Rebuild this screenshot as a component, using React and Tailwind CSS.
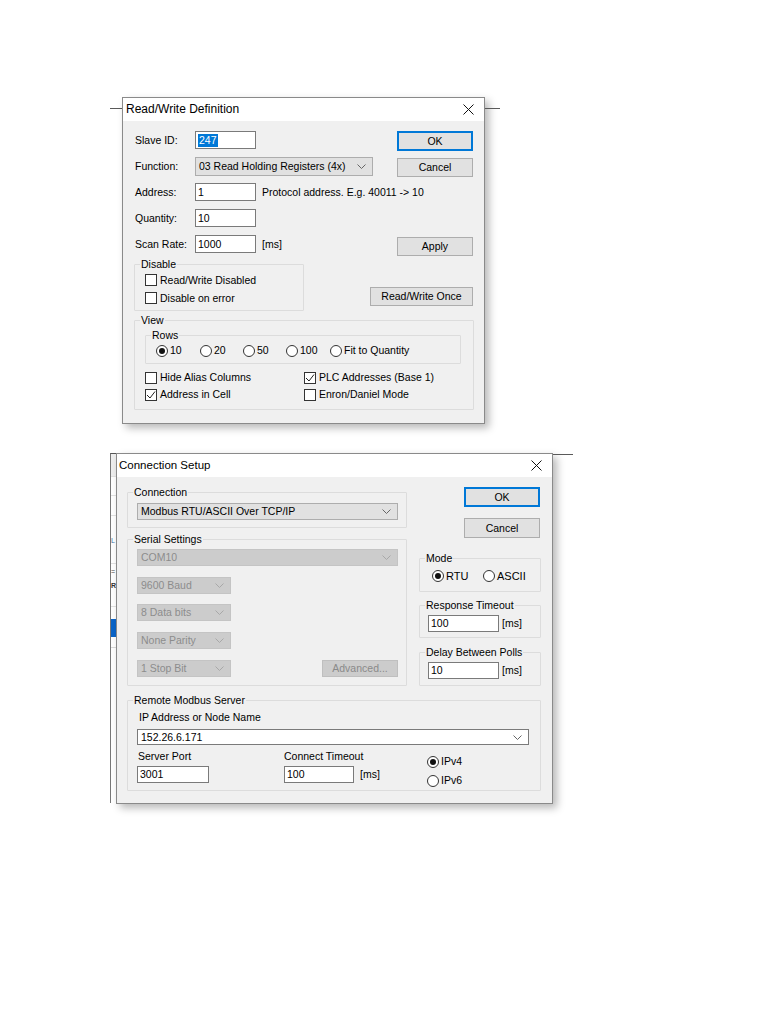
import React from 'react';

const FONT = "font-['Liberation_Sans',Arial,sans-serif]";

const Close = () => (
  <svg width="11" height="11" viewBox="0 0 11 11" className="shrink-0">
    <path d="M0.5 0.5 L10.5 10.5 M10.5 0.5 L0.5 10.5" stroke="#111" strokeWidth="1" />
  </svg>
);

const Chevron = ({ color = '#555' }) => (
  <svg width="9" height="5" viewBox="0 0 9 5" className="shrink-0">
    <path d="M0.5 0.5 L4.5 4.5 L8.5 0.5" stroke={color} strokeWidth="1" fill="none" />
  </svg>
);

const Btn = ({ children, def, disabled, className = '' }) => (
  <div
    className={`flex items-center justify-center border ${
      def ? 'border-[#0078d7] bg-[#e1e1e1] shadow-[inset_0_0_0_1px_#0078d7]' : disabled ? 'border-[#bfbfbf] bg-[#cccccc] text-[#8a8a8a]' : 'border-[#adadad] bg-[#e1e1e1]'
    } ${className}`}
  >
    {children}
  </div>
);

const Input = ({ value, className = '', selected }) => (
  <div className={`flex items-center bg-white border border-[#7a7a7a] pl-[2px] ${className}`}>
    {selected ? <span className="bg-[#0078d7] text-white px-[1px] leading-[13px]">{value}</span> : value}
  </div>
);

const Select = ({ value, disabled, white, className = '' }) => (
  <div
    className={`flex items-center justify-between pl-[3px] pr-[6px] border ${
      disabled ? 'bg-[#cccccc] border-[#c4c4c4] text-[#8c8c8c]' : white ? 'bg-white border-[#7a7a7a]' : 'bg-[#e1e1e1] border-[#adadad]'
    } ${className}`}
  >
    <span>{value}</span>
    <Chevron color={disabled ? '#a8a8a8' : '#666'} />
  </div>
);

const Check = ({ checked, label, className = '' }) => (
  <div className={`flex items-center gap-[3px] ${className}`}>
    <span className="w-[12px] h-[12px] border border-[#333] bg-white flex items-center justify-center shrink-0">
      {checked && (
        <svg width="10" height="10" viewBox="0 0 10 10">
          <path d="M1 5 L4 8 L9 1.5" stroke="#222" strokeWidth="1" fill="none" />
        </svg>
      )}
    </span>
    <span>{label}</span>
  </div>
);

const Radio = ({ checked, label, className = '' }) => (
  <div className={`flex items-center gap-[2px] ${className}`}>
    <span className="w-[12px] h-[12px] rounded-full border border-[#333] bg-white flex items-center justify-center shrink-0">
      {checked && <span className="w-[6px] h-[6px] rounded-full bg-[#111]" />}
    </span>
    <span>{label}</span>
  </div>
);

const Group = ({ title, className = '', children }) => (
  <fieldset className={`border border-[#dcdcdc] rounded-[1px] ${className}`}>
    <legend className="ml-[5px] px-[1px] leading-[13px]">{title}</legend>
    {children}
  </fieldset>
);

function ReadWriteDialog() {
  return (
    <div className="w-[363px] h-[327px] border border-[#8a8a8a] bg-[#f0f0f0] shadow-[4px_4px_8px_rgba(0,0,0,0.28)] flex flex-col shrink-0">
      {/* title bar */}
      <div className="h-[23px] bg-white flex items-center justify-between pl-[3px] pr-[10px] shrink-0">
        <span className="text-[12px] text-black">Read/Write Definition</span>
        <Close />
      </div>
      <div className="pl-[11px] pr-[11px] pt-[10px] flex flex-col">
        <div className="h-[26px] flex items-start">
          <div className="w-[61px] pl-[1px] h-[18px] flex items-center">Slave ID:</div>
          <Input value="247" selected className="w-[61px] h-[18px]" />
          <Btn def className="ml-auto w-[76px] h-[20px]">OK</Btn>
        </div>
        <div className="h-[26px] flex items-start">
          <div className="w-[61px] pl-[1px] h-[19px] flex items-center">Function:</div>
          <Select value="03 Read Holding Registers (4x)" className="w-[178px] h-[19px]" />
          <Btn className="ml-auto mt-[1px] w-[76px] h-[19px]">Cancel</Btn>
        </div>
        <div className="h-[26px] flex items-start">
          <div className="w-[61px] pl-[1px] h-[18px] flex items-center">Address:</div>
          <Input value="1" className="w-[61px] h-[18px]" />
          <span className="ml-[6px] h-[18px] flex items-center">Protocol address. E.g. 40011 -&gt; 10</span>
        </div>
        <div className="h-[26px] flex items-start">
          <div className="w-[61px] pl-[1px] h-[18px] flex items-center">Quantity:</div>
          <Input value="10" className="w-[61px] h-[18px]" />
        </div>
        <div className="h-[23px] flex items-start">
          <div className="w-[61px] pl-[1px] h-[18px] flex items-center">Scan Rate:</div>
          <Input value="1000" className="w-[61px] h-[18px]" />
          <span className="ml-[6px] h-[18px] flex items-center">[ms]</span>
          <Btn className="ml-auto mt-[2px] w-[76px] h-[19px]">Apply</Btn>
        </div>
        <div className="flex items-start">
          <Group title="Disable" className="w-[170px] h-[53px]">
            <Check label="Read/Write Disabled" className="h-[18px] pl-[10px]" />
            <Check label="Disable on error" className="h-[18px] pl-[10px]" />
          </Group>
          <Btn className="ml-auto mt-[29px] w-[103px] h-[19px]">Read/Write Once</Btn>
        </div>
        <Group title="View" className="mt-[3px] w-[340px] h-[96px]">
          <Group title="Rows" className="ml-[10px] mt-[2px] w-[316px] h-[35px]">
            <div className="h-[17px] flex items-center pl-[10px]">
              <Radio checked label="10" className="w-[44px]" />
              <Radio label="20" className="w-[43px]" />
              <Radio label="50" className="w-[43px]" />
              <Radio label="100" className="w-[44px]" />
              <Radio label="Fit to Quantity" />
            </div>
          </Group>
          <div className="mt-[5px] pl-[10px] flex">
            <div className="w-[159px]">
              <Check label="Hide Alias Columns" className="h-[17px]" />
              <Check checked label="Address in Cell" className="h-[17px]" />
            </div>
            <div>
              <Check checked label="PLC Addresses (Base 1)" className="h-[17px]" />
              <Check label="Enron/Daniel Mode" className="h-[17px]" />
            </div>
          </div>
        </Group>
      </div>
    </div>
  );
}

function ConnectionDialog() {
  return (
    <div className="w-[437px] h-[351px] border border-[#8a8a8a] bg-[#f0f0f0] shadow-[4px_4px_8px_rgba(0,0,0,0.28)] flex flex-col shrink-0">
      <div className="h-[23px] bg-white flex items-center justify-between pl-[2px] pr-[10px] shrink-0">
        <span className="text-[11.5px] text-black">Connection Setup</span>
        <Close />
      </div>
      <div className="pl-[10px] pr-[10px] pt-[9px] flex flex-col">
        <div className="flex items-start gap-[12px]">
          {/* left column */}
          <div className="w-[280px] flex flex-col">
            <Group title="Connection" className="w-[280px] h-[42px]">
              <Select value="Modbus RTU/ASCII Over TCP/IP" className="ml-[9px] mt-[4px] w-[261px] h-[17px]" />
            </Group>
            <Group title="Serial Settings" className="mt-[5px] w-[280px] h-[153px]">
              <Select disabled value="COM10" className="ml-[9px] mt-[3px] w-[261px] h-[17px]" />
              <Select disabled value="9600 Baud" className="ml-[9px] mt-[11px] w-[94px] h-[17px]" />
              <Select disabled value="8 Data bits" className="ml-[9px] mt-[10px] w-[94px] h-[17px]" />
              <Select disabled value="None Parity" className="ml-[9px] mt-[11px] w-[94px] h-[17px]" />
              <div className="ml-[9px] mt-[11px] w-[261px] flex items-center justify-between">
                <Select disabled value="1 Stop Bit" className="w-[94px] h-[17px]" />
                <Btn disabled className="w-[76px] h-[17px]">Advanced...</Btn>
              </div>
            </Group>
          </div>
          {/* right column */}
          <div className="w-[122px] flex flex-col">
            <Btn def className="self-end mr-[1px] mt-[1px] w-[76px] h-[20px]">OK</Btn>
            <Btn className="self-end mr-[1px] mt-[11px] w-[76px] h-[20px]">Cancel</Btn>
            <Group title="Mode" className="mt-[14px] w-[122px] h-[40px]">
              <div className="h-[20px] mt-[1px] pl-[12px] flex items-center">
                <Radio checked label="RTU" className="w-[51px] text-[11px]" />
                <Radio label="ASCII" className="text-[11px]" />
              </div>
            </Group>
            <Group title="Response Timeout" className="mt-[7px] w-[122px] h-[39px]">
              <div className="mt-[3px] pl-[8px] flex items-center">
                <Input value="100" className="w-[71px] h-[17px]" />
                <span className="ml-[3px]">[ms]</span>
              </div>
            </Group>
            <Group title="Delay Between Polls" className="mt-[8px] w-[122px] h-[40px]">
              <div className="mt-[3px] pl-[8px] flex items-center">
                <Input value="10" className="w-[71px] h-[17px]" />
                <span className="ml-[3px]">[ms]</span>
              </div>
            </Group>
          </div>
        </div>
        <Group title="Remote Modbus Server" className="mt-[8px] w-[414px] h-[97px]">
          <div className="mt-[3px] pl-[11px] h-[14px] flex items-center">IP Address or Node Name</div>
          <Select white value="152.26.6.171" className="ml-[9px] mt-[5px] w-[392px] h-[16px]" />
          <div className="ml-[9px] flex">
            <div className="w-[147px] pt-[5px]">
              <div className="h-[13px] flex items-center pl-[1px]">Server Port</div>
              <Input value="3001" className="mt-[3px] w-[72px] h-[17px]" />
            </div>
            <div className="w-[143px] pt-[5px]">
              <div className="h-[13px] flex items-center">Connect Timeout</div>
              <div className="mt-[3px] flex items-center">
                <Input value="100" className="w-[70px] h-[17px]" />
                <span className="ml-[6px]">[ms]</span>
              </div>
            </div>
            <div className="pt-[7px]">
              <Radio checked label="IPv4" className="h-[19px]" />
              <Radio label="IPv6" className="h-[19px]" />
            </div>
          </div>
        </Group>
      </div>
    </div>
  );
}

// fragments of the window that sits behind the second dialog
function BackStrip() {
  return (
    <div className="w-[6px] h-[350px] border-l border-[#777] border-t border-t-[#555] bg-white flex flex-col text-[7px] leading-none overflow-hidden shrink-0">
      <div className="h-[23px] bg-[#eeeeee] border-b border-[#e2e2e2]" />
      <div className="h-[19px] border-b border-[#e2e2e2]" />
      <div className="h-[20px] border-b border-[#e2e2e2]" />
      <div className="h-[28px] flex items-end text-[#3a6ea5]">
        <span>L</span>
      </div>
      <div className="h-[20px] border-b border-[#e2e2e2]" />
      <div className="h-[14px] flex items-center text-[#444]">
        <span>=</span>
      </div>
      <div className="h-[14px] flex items-center font-bold text-[#333]">
        <span>R</span>
      </div>
      <div className="h-[15px] border-b border-[#e2e2e2]" />
      <div className="mt-[12px] h-[18px] bg-[#0a64c8]" />
      <div className="h-[11px] border-b border-[#dadada]" />
    </div>
  );
}

export default function App() {
  return (
    <div className={`w-[768px] h-[1024px] bg-white text-black text-[10.5px] leading-[13px] ${FONT}`}>
      <div className="pt-[97px] pl-[110px] flex items-start">
        <div className="w-[12px] mt-[11px] h-[1px] bg-[#5a5a5a] shrink-0" />
        <ReadWriteDialog />
        <div className="w-[15px] mt-[11px] h-[1px] bg-[#5a5a5a] shrink-0" />
      </div>
      <div className="mt-[29px] pl-[110px] flex items-start">
        <BackStrip />
        <ConnectionDialog />
        <div className="w-[20px] mt-[1px] h-[1px] bg-[#5a5a5a] shrink-0" />
      </div>
    </div>
  );
}
